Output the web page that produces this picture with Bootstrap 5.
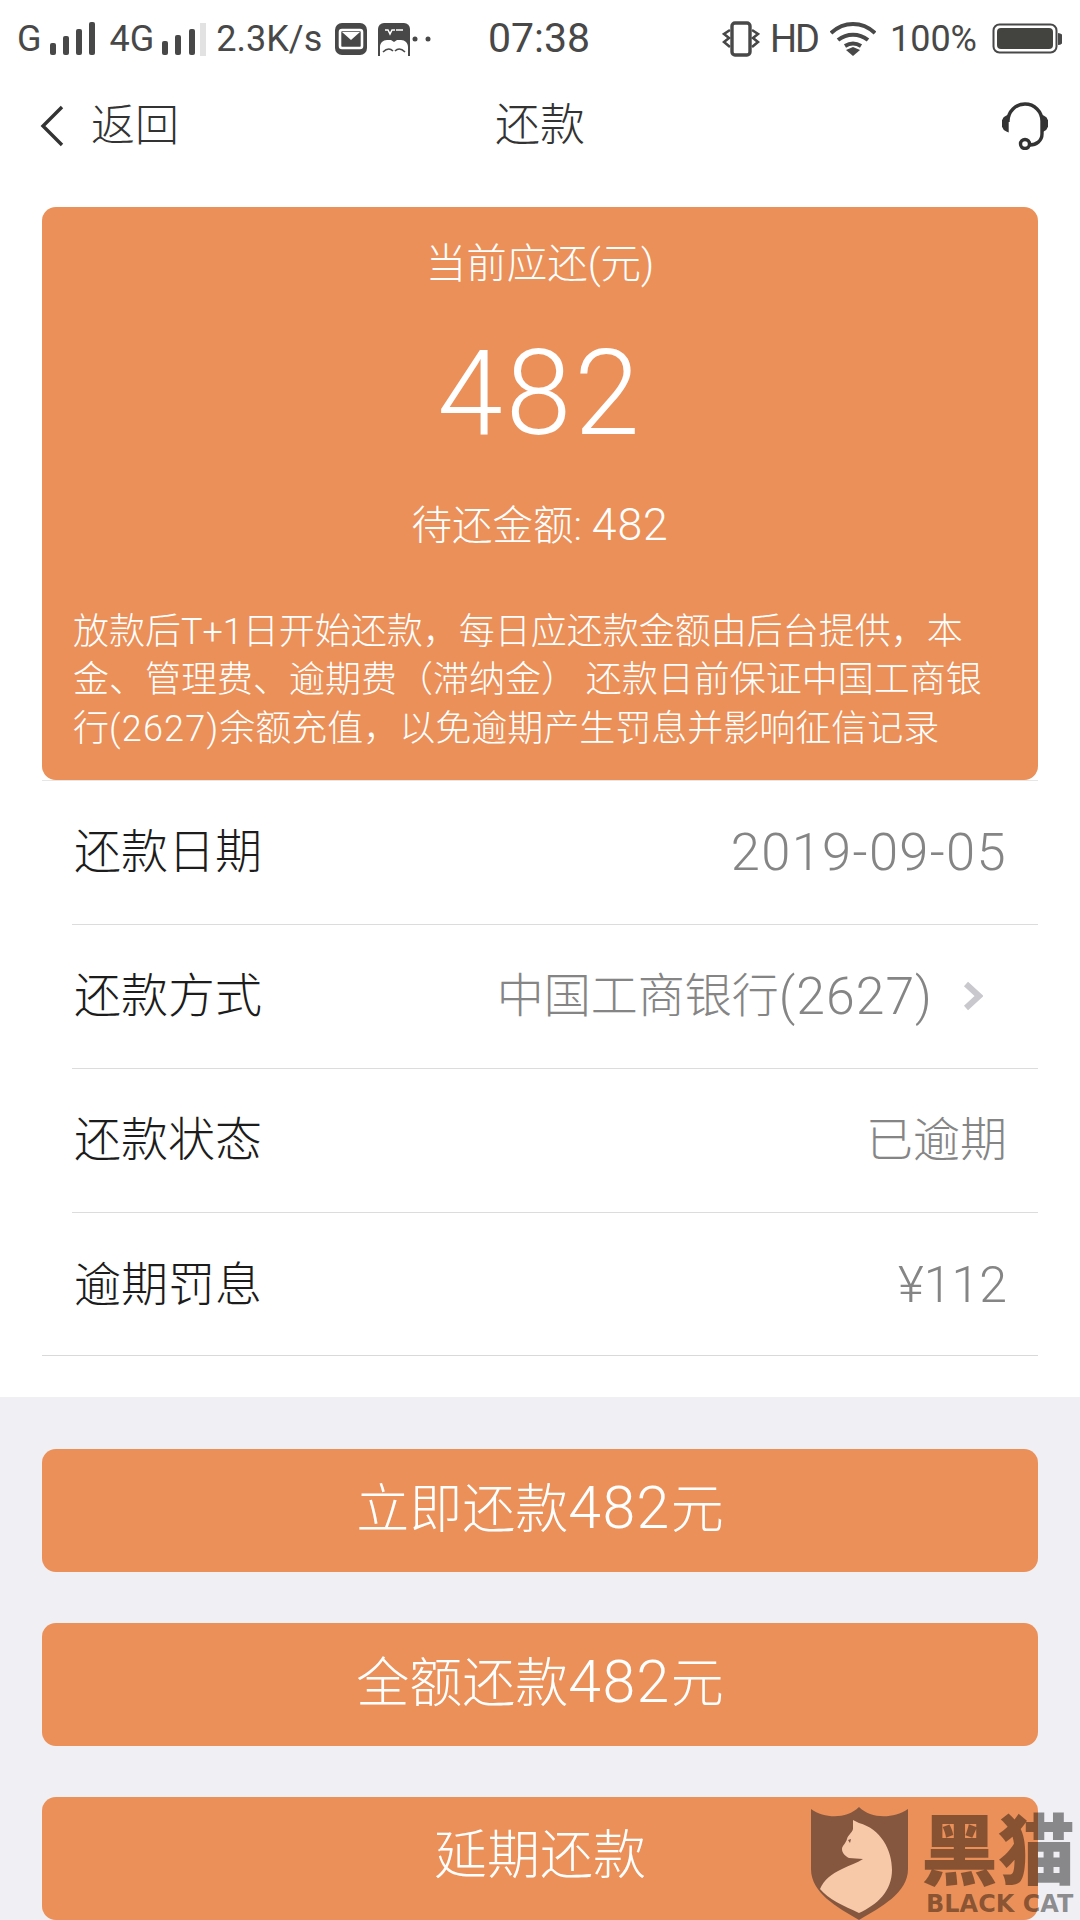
<!DOCTYPE html>
<html lang="zh-CN">
<head>
  <meta charset="UTF-8" />
  <title>还款</title>
  <meta name="viewport" content="width=device-width, initial-scale=1" />
  <link href="https://cdn.jsdelivr.net/npm/bootstrap@5.3.0/dist/css/bootstrap.min.css" rel="stylesheet" />
  <style>
    body {
      width: 1080px;
      height: 1920px;
      overflow: hidden;
      background: #fff;
      font-family: "Roboto", "Noto Sans CJK SC", sans-serif;
      font-weight: 300;
      color: #333;
    }
    .status-row {
      height: 78px;
      padding: 0 18px 0 17px;
      color: #484848;
      font-size: 36px;
      font-weight: 400;
      white-space: nowrap;
      position: relative;
    }
    .status-time {
      position: absolute;
      left: 488px;
      top: 13px;
      font-size: 41px;
      line-height: 50px;
    }
    .hd-text {
      font-size: 38px;
      letter-spacing: -2px;
      margin-left: 10px;
    }
    .head-row {
      height: 91px;
      padding: 5px 32px 0 40px;
      font-size: 44px;
      position: relative;
    }
    .head-title {
      position: absolute;
      left: 0;
      right: 0;
      text-align: center;
      font-size: 45px;
    }
    .pay-card {
      margin: 38px 42px 0;
      height: 573px;
      background: #eb9059;
      border-radius: 14px;
      color: #fff;
      text-align: center;
      padding-top: 33px;
      font-size: 40.5px;
    }
    .pay-sub { line-height: 48px; }
    .pay-amount {
      font-size: 118px;
      letter-spacing: 3px;
      line-height: 140px;
      margin-top: 36px;
    }
    .pay-left {
      line-height: 48px;
      margin-top: 37px;
    }
    .pay-note {
      text-align: left;
      font-size: 36px;
      line-height: 48.4px;
      padding: 0 36px 0 31px;
      margin-top: 58px;
    }
    .note-num { letter-spacing: 1.2px; }
    .num-val {
      font-size: 1.1em;
      letter-spacing: .02em;
    }
    .date-val {
      font-size: 52.5px;
      letter-spacing: .025em;
    }
    .fine-val {
      font-size: 50px;
    }
    .info-list {
      margin: 0 42px;
      border-top: 1px solid #e6e6e6;
      border-bottom: 1px solid #d9d9d9;
      height: 576px;
    }
    .info-line {
      height: 144px;
      margin-left: 30px;
      padding-right: 31px;
      border-bottom: 1px solid #dcdcdc;
      font-size: 47px;
      color: #1c1c1c;
    }
    .info-line:last-child { border-bottom: 0; }
    .info-label { margin-left: 2px; }
    .info-value { color: #858585; }
    .foot-area {
      margin-top: 41px;
      height: 523px;
      background: #efeff4;
      padding: 52px 42px 0;
    }
    .foot-btn {
      width: 100%;
      height: 123px;
      margin-bottom: 51px;
      padding-bottom: 10px;
      background: #eb9059;
      border: 0;
      border-radius: 14px;
      color: #fff;
      font-size: 53px;
      font-weight: 300;
    }
    .foot-btn:hover, .foot-btn:active { background: #eb9059 !important; color: #fff !important; }
    .btn-num {
      font-size: 59px;
      letter-spacing: .025em;
    }
    .cat-mark {
      position: absolute;
      left: 811px;
      top: 1807px;
      width: 269px;
      height: 113px;
      color: rgba(0, 0, 0, .43);
    }
    .cat-shield {
      position: absolute;
      left: 0;
      top: 0;
    }
    .cat-name {
      position: absolute;
      left: 110px;
      top: 1px;
      font-size: 77px;
      line-height: 76px;
      font-weight: 900;
      font-family: "Noto Sans CJK SC", sans-serif;
      white-space: nowrap;
    }
    .cat-latin {
      position: absolute;
      left: 115px;
      top: 82px;
      font-family: "DejaVu Sans", sans-serif;
      font-size: 24px;
      line-height: 30px;
      font-weight: 700;
      white-space: nowrap;
    }
  </style>
</head>
<body>
  <div class="status-row d-flex align-items-center justify-content-between">
    <div class="d-flex align-items-center">
      <span>G</span>
      <svg class="ms-2" width="46" height="34" viewBox="0 0 46 34" fill="#484848"><rect x="0" y="21" width="6" height="12" rx="2"/><rect x="13" y="14" width="6" height="19" rx="2"/><rect x="26" y="7" width="6" height="26" rx="2"/><rect x="39" y="0" width="6" height="33" rx="2"/></svg>
      <span style="margin-left:14px">4G</span>
      <svg class="ms-2" width="34" height="34" viewBox="0 0 34 34" fill="#484848"><rect x="0" y="19" width="6" height="14" rx="2"/><rect x="13" y="13" width="6" height="20" rx="2"/><rect x="27" y="7" width="6" height="26" rx="2"/></svg>
      <svg style="margin-left:4px" width="6" height="33" viewBox="0 0 6 33" fill="#e2e2e2"><rect width="6" height="33"/></svg>
      <span style="margin-left:10px">2.3K/s</span>
      <svg style="margin-left:13px" width="32" height="32" viewBox="0 0 32 32"><rect width="32" height="32" rx="7" fill="#484848"/><rect x="5" y="7" width="22" height="18" rx="2" fill="none" stroke="#fff" stroke-width="2.6"/><path d="M7 9l9 8 9-8z" fill="#fff"/></svg>
      <svg style="margin-left:11px" width="32" height="33" viewBox="0 0 32 33"><path d="M6 0h20a6 6 0 0 1 6 6v27H0V6a6 6 0 0 1 6-6z" fill="#484848"/><path d="M2 33v-9c0-4 3-7 7-7h4l3 2 3-2h4c4 0 7 3 7 7v9z" fill="#fff"/><path d="M5 29c4-4 7-4 10-1M17 28c3-3 6-3 10 1" stroke="#484848" stroke-width="1.6" fill="none"/><path d="M7 7h3l2 4 2-4h3M18 7h7" stroke="#fff" stroke-width="1.5" fill="none"/></svg>
      <svg style="margin-left:2px" width="20" height="8" viewBox="0 0 20 8" fill="#484848"><circle cx="3" cy="4" r="2.5"/><circle cx="16" cy="4" r="2.5"/></svg>
    </div>
    <span class="status-time">07:38</span>
    <div class="d-flex align-items-center">
      <svg width="38" height="36" viewBox="0 0 38 36" fill="none" stroke="#484848" stroke-width="2.6"><rect x="10" y="2" width="18" height="32" rx="3" stroke-width="3.4"/><path d="M8 9L2 13l5 4-5 4 6 5M30 9l6 4-5 4 5 4-6 5"/></svg>
      <span class="hd-text">HD</span>
      <svg style="margin-left:12px" width="46" height="34" viewBox="0 0 46 34" fill="none" stroke="#484848" stroke-width="4"><path d="M1 11c13-12 31-12 44 0M8 18c9-7 21-7 30 0M15 24c5-3 11-3 16 0"/><path d="M16 28l7-3 7 3-7 6z" fill="#484848" stroke="none"/></svg>
      <span style="margin-left:14px">100%</span>
      <svg style="margin-left:15px" width="70" height="32" viewBox="0 0 70 32"><rect x="1.5" y="1.5" width="63" height="28" rx="6" fill="none" stroke="#484848" stroke-width="2"/><rect x="5" y="5" width="56" height="21" rx="4" fill="#434340"/><path d="M66 10a6 6 0 0 1 0 12z" fill="#484848"/></svg>
    </div>
  </div>

  <div class="head-row d-flex align-items-center justify-content-between">
    <div class="d-flex align-items-center">
      <svg width="24" height="42" viewBox="0 0 24 42" fill="none" stroke="#333" stroke-width="3.4"><path d="M22 2L3 21l19 19"/></svg>
      <span style="margin-left:27px">返回</span>
    </div>
    <span class="head-title">还款</span>
    <svg width="46" height="48" viewBox="0 0 46 48" fill="none" stroke="#333" stroke-width="3.4"><path d="M6 20v-1a17 17 0 0 1 34 0v13c0 7-6 11-12 11"/><path d="M5 15c-5 2-5 11 0 13zM41 15c5 2 5 11 0 13z" fill="#333"/><circle cx="23" cy="42" r="4.5"/></svg>
  </div>

  <div class="pay-card">
    <div class="pay-sub">当前应还(元)</div>
    <div class="pay-amount">482</div>
    <div class="pay-left">待还金额: <span class="num-val">482</span></div>
    <div class="pay-note">放款后T+1日开始还款，每日应还款金额由后台提供，本金、管理费、逾期费（滞纳金） 还款日前保证中国工商银行<span class="note-num">(2627)</span>余额充值，以免逾期产生罚息并影响征信记录</div>
  </div>

  <div class="info-list">
    <div class="info-line d-flex align-items-center justify-content-between">
      <span class="info-label">还款日期</span><span class="info-value date-val">2019-09-05</span>
    </div>
    <div class="info-line d-flex align-items-center justify-content-between">
      <span class="info-label">还款方式</span>
      <span class="info-value d-flex align-items-center">中国工商银行<span class="num-val">(2627)</span>
        <svg style="margin:0 24px 0 30px" width="20" height="30" viewBox="0 0 20 30" fill="none" stroke="#c8c8cd" stroke-width="6"><path d="M3 3l13 12L3 27"/></svg>
      </span>
    </div>
    <div class="info-line d-flex align-items-center justify-content-between">
      <span class="info-label">还款状态</span><span class="info-value">已逾期</span>
    </div>
    <div class="info-line d-flex align-items-center justify-content-between">
      <span class="info-label">逾期罚息</span><span class="info-value fine-val">¥112</span>
    </div>
  </div>

  <div class="foot-area">
    <button type="button" class="btn foot-btn">立即还款<span class="btn-num">482</span>元</button>
    <button type="button" class="btn foot-btn">全额还款<span class="btn-num">482</span>元</button>
    <button type="button" class="btn foot-btn">延期还款</button>
  </div>

  <div class="cat-mark">
    <svg class="cat-shield" width="98" height="113" viewBox="0 0 98 113">
      <path d="M0 2c14 10 36 10 48-2 12 12 34 12 49 2v60c0 24-27 38-49 51C26 100 0 86 0 62z" fill="#85573f"/>
      <path d="M42 13l6 3c22 6 33 27 33 47 0 21-15 35-33 43C33 99 17 92 9 82c4-9 11-15 22-20 8-4 15-6 21-10l-14-1c-4-2-7-5-7-9 0-3 4-6 5-10 1-4 5-6 6-10z" fill="#f7c9a9"/>
      <path d="M37 33l3-1-1 4z" fill="#85573f"/>
    </svg>
    <span class="cat-name">黑猫</span>
    <span class="cat-latin">BLACK CAT</span>
  </div>

  <script src="https://cdn.jsdelivr.net/npm/bootstrap@5.3.0/dist/js/bootstrap.bundle.min.js"></script>
</body>
</html>
